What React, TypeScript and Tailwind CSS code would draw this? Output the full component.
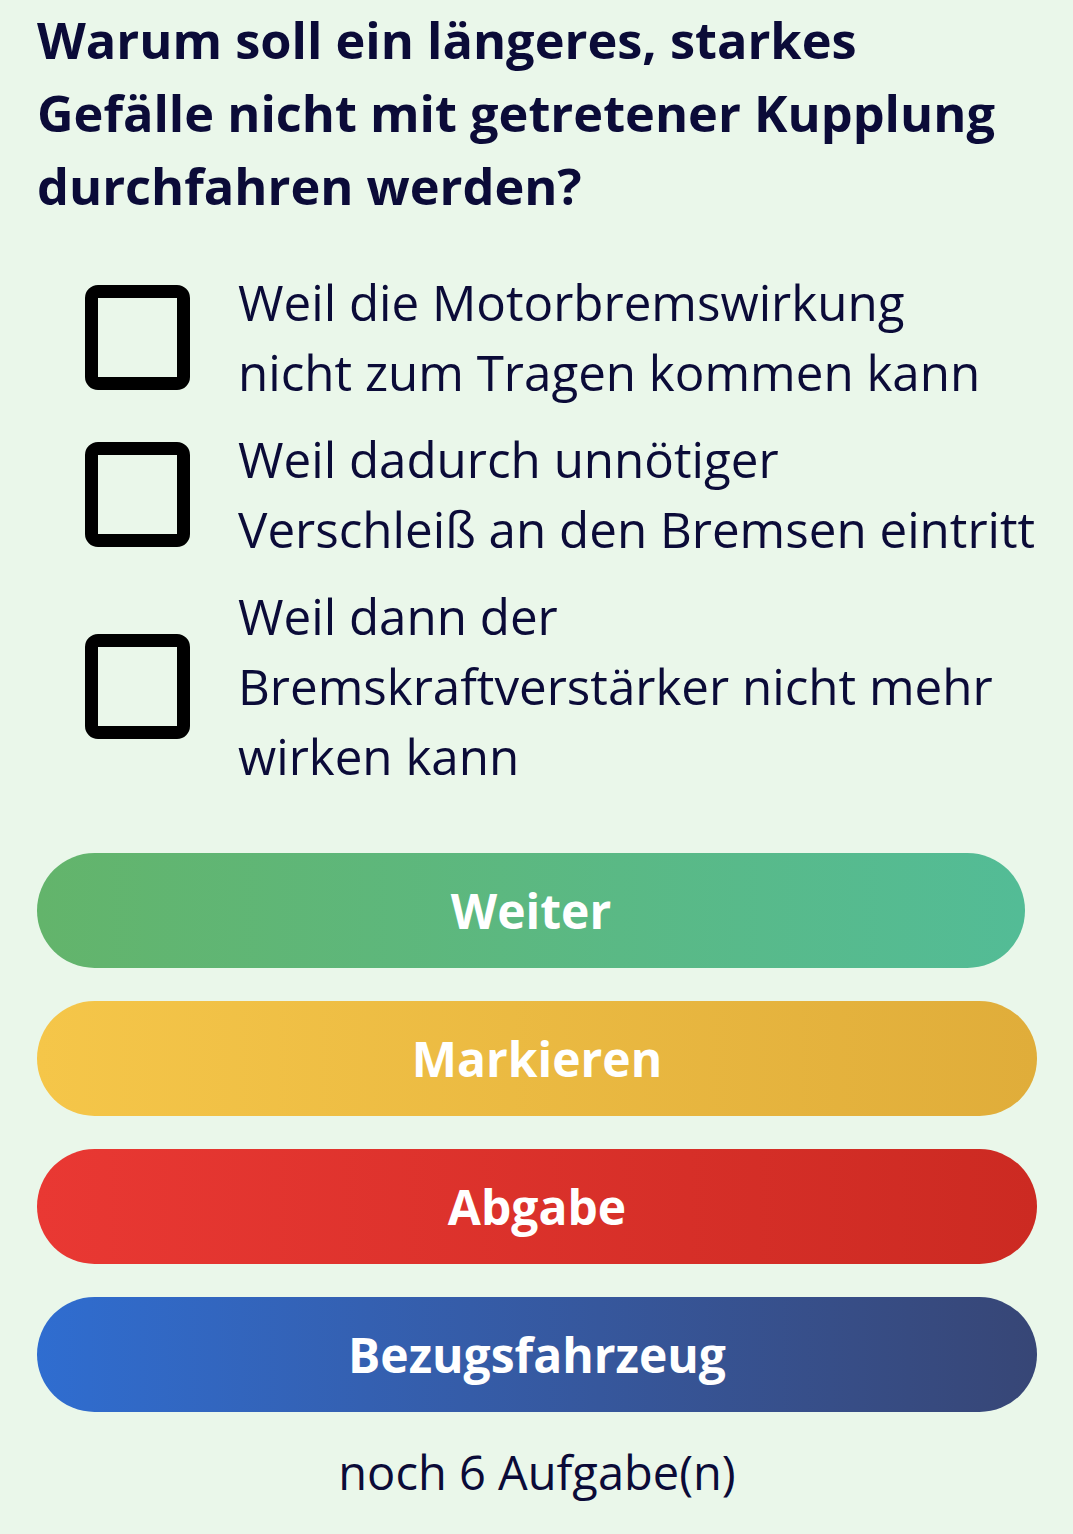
const answers = [
  ["Weil die Motorbremswirkung", "nicht zum Tragen kommen kann"],
  ["Weil dadurch unnötiger", "Verschleiß an den Bremsen eintritt"],
  ["Weil dann der", "Bremskraftverstärker nicht mehr", "wirken kann"],
];

function Checkbox() {
  return <div className="w-[105px] h-[105px] shrink-0 border-[13px] border-black rounded-[13px]" />;
}

export default function App() {
  return (
    <div
      className="min-h-[1534px] bg-[#eaf7ea] pl-[37px] pr-[36px] pt-[3px] text-[#0b0b38]"
      style={{ fontFamily: '"Open Sans", "Noto Sans", sans-serif' }}
    >
      {/* question */}
      <h1 className="text-[50.5px] font-bold leading-[73px] whitespace-nowrap">
        Warum soll ein längeres, starkes
        <br />
        Gefälle nicht mit getretener Kupplung
        <br />
        durchfahren werden?
      </h1>

      {/* answer options */}
      <div className="mt-[45px] flex flex-col gap-[17px]">
        {answers.map((lines, i) => (
          <div key={i} className="flex items-center pl-[48px]">
            <Checkbox />
            <p className="ml-[48px] text-[49.3px] leading-[70px] whitespace-nowrap">
              {lines.map((l, j) => (
                <span key={j} className="block">
                  {l}
                </span>
              ))}
            </p>
          </div>
        ))}
      </div>

      {/* actions */}
      <div className="mt-[62px] flex flex-col gap-[33px]">
        <button className="w-[988px] h-[115px] rounded-full bg-gradient-to-r from-[#63b46b] to-[#53bc96] text-white text-[48px] font-bold">
          Weiter
        </button>
        <button className="w-full h-[115px] rounded-full bg-gradient-to-r from-[#f5c649] to-[#e0ad3a] text-white text-[48px] font-bold">
          Markieren
        </button>
        <button className="w-full h-[115px] rounded-full bg-gradient-to-r from-[#e93833] to-[#cc2a22] text-white text-[48px] font-bold">
          Abgabe
        </button>
        <button className="w-full h-[115px] rounded-full bg-gradient-to-r from-[#2f6dd0] to-[#374676] text-white text-[48px] font-bold">
          Bezugsfahrzeug
        </button>
      </div>

      <p className="mt-[29px] text-center text-[47px] leading-[62px]">noch 6 Aufgabe(n)</p>
    </div>
  );
}
